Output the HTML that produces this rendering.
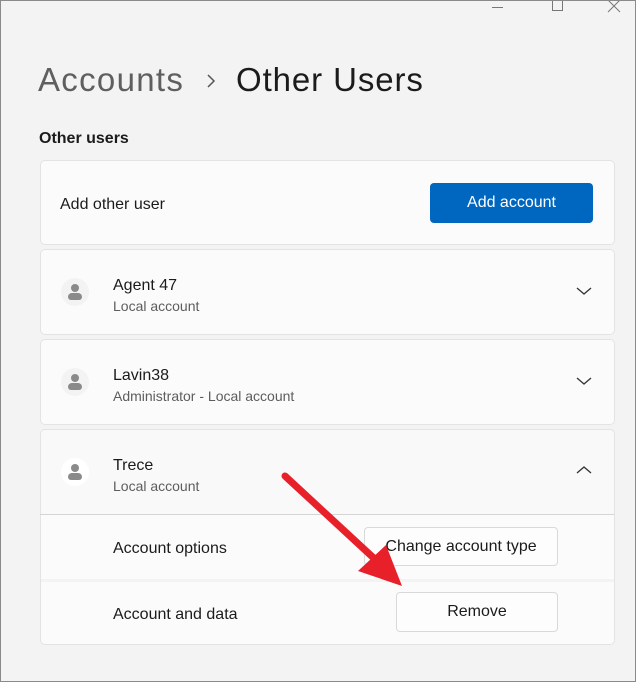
<!DOCTYPE html>
<html><head><meta charset="utf-8"><style>
*{margin:0;padding:0;box-sizing:border-box}
body{width:636px;height:682px;background:#f3f3f3;font-family:"Liberation Sans",sans-serif;color:#1b1b1b;position:relative;overflow:hidden}
.a{position:absolute}
.card{position:absolute;left:40px;width:575px;background:#fbfbfb;border:1px solid #e3e3e3;border-radius:5px}
.t{font-size:16px;color:#1b1b1b}
.s{font-size:14px;color:#5d5d5d}
.btn{position:absolute;background:#fdfdfd;border:1px solid #d9d9d9;border-radius:4px;font-size:16px;text-align:center}
.av{position:absolute;left:61px;width:28px;height:28px;border-radius:50%;background:#f3f3f3}
.av:before{content:"";position:absolute;left:10px;top:6px;width:8px;height:8px;border-radius:50%;background:#8a8a8a}
.av:after{content:"";position:absolute;left:7px;top:15px;width:14px;height:7px;border-radius:4px 4px 3px 3px;background:#8a8a8a}
</style></head><body>
<div class="a" style="left:0;top:0;width:636px;height:682px;border:1px solid #8a8a8a;z-index:5"></div>
<div class="a" style="left:492px;top:7px;width:11px;height:1px;background:#777"></div>
<div class="a" style="left:552px;top:0px;width:11px;height:11px;border:1px solid #777;border-top:none"></div>
<svg class="a" style="left:607px;top:0" width="14" height="14"><path d="M1 0L13 12M13 0L1 12" stroke="#777" stroke-width="1"/></svg>
<div class="a" style="left:38px;top:61px;font-size:33px;color:#5f5f5f;letter-spacing:1.3px">Accounts</div>
<svg class="a" style="left:205px;top:73px" width="12" height="16"><path d="M3 2L9 8L3 14" stroke="#555" stroke-width="1.5" fill="none"/></svg>
<div class="a" style="left:236px;top:61px;font-size:33px;color:#1b1b1b;letter-spacing:0.9px">Other Users</div>
<div class="a" style="left:39px;top:130px;font-size:16px;font-weight:bold;color:#1b1b1b">Other users</div>

<div class="card" style="top:160px;height:85px"></div>
<div class="a t" style="left:60px;top:196px">Add other user</div>
<div class="a" style="left:430px;top:183px;width:163px;height:40px;background:#0067c0;border-radius:4px;color:#fff;font-size:16px;text-align:center;line-height:40px">Add account</div>

<div class="card" style="top:249px;height:86px"></div>
<div class="av" style="top:278px"></div>
<div class="a t" style="left:113px;top:277px">Agent 47</div>
<div class="a s" style="left:113px;top:298px">Local account</div>
<svg class="a" style="left:576px;top:286px" width="16" height="10"><path d="M1 2L8 8L15 2" stroke="#333" stroke-width="1.3" fill="none"/></svg>

<div class="card" style="top:339px;height:86px"></div>
<div class="av" style="top:368px"></div>
<div class="a t" style="left:113px;top:367px">Lavin38</div>
<div class="a s" style="left:113px;top:388px">Administrator - Local account</div>
<svg class="a" style="left:576px;top:376px" width="16" height="10"><path d="M1 2L8 8L15 2" stroke="#333" stroke-width="1.3" fill="none"/></svg>

<div class="card" style="top:429px;height:216px;background:#f9f9f9"></div>
<div class="av" style="top:458px;background:#fff"></div>
<div class="a t" style="left:113px;top:457px">Trece</div>
<div class="a s" style="left:113px;top:478px">Local account</div>
<svg class="a" style="left:576px;top:465px" width="16" height="10"><path d="M1 8L8 2L15 8" stroke="#333" stroke-width="1.3" fill="none"/></svg>
<div class="a" style="left:40px;top:514px;width:574px;height:1px;background:#d5d5d5"></div>
<div class="a" style="left:41px;top:515px;width:573px;height:64px;background:#fbfbfb"></div>
<div class="a" style="left:41px;top:579px;width:573px;height:3px;background:#f3f3f3"></div>
<div class="a" style="left:41px;top:582px;width:573px;height:62px;background:#fbfbfb;border-radius:0 0 5px 5px"></div>
<div class="a t" style="left:113px;top:540px">Account options</div>
<div class="btn" style="left:364px;top:527px;width:194px;height:39px;line-height:37px">Change account type</div>
<div class="a t" style="left:113px;top:606px">Account and data</div>
<div class="btn" style="left:396px;top:592px;width:162px;height:40px;line-height:38px">Remove</div>

<svg class="a" style="left:0;top:0" width="636" height="682"><path d="M285 476L378 562" stroke="#e8202a" stroke-width="7" stroke-linecap="round"/><path d="M402 586L358 571L386 545Z" fill="#e8202a"/></svg>
</body></html>
